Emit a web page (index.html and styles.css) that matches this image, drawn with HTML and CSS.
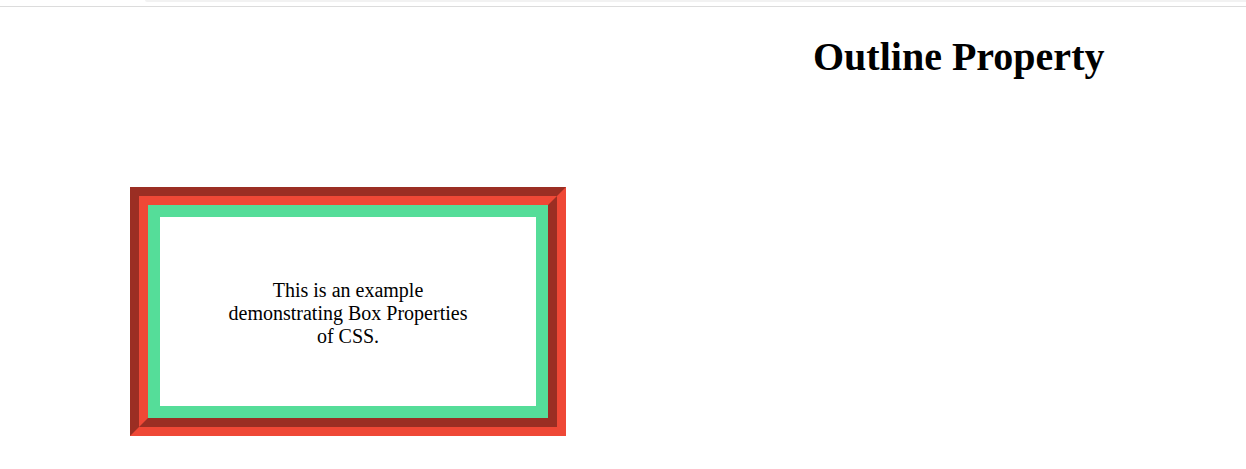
FILE: index.html
```html
<!DOCTYPE html>
<html lang="en">
<head>
<meta charset="utf-8">
<title>Outline Property</title>
<link rel="stylesheet" href="styles.css">
</head>
<body>
<div class="topbar"><div class="tab"></div></div>
<header class="header">
  <h1 class="title">Outline Property</h1>
</header>
<main class="main">
  <div class="box">This is an example demonstrating Box Properties of CSS.</div>
</main>
</body>
</html>
```

FILE: styles.css
```css
html, body {
  margin: 0;
  padding: 0;
  background: #ffffff;
}

body {
  font-family: "Liberation Serif", "Times New Roman", serif;
  color: #000000;
  min-height: 469px;
}

.topbar {
  height: 6px;
  border-bottom: 1px solid #dcdcdc;
}

.tab {
  margin-left: 145px;
  height: 2px;
  background: #f2f2f2;
  border-bottom-left-radius: 4px;
}

.header {
  padding-left: 813px;
  margin-top: 26px;
}

.title {
  margin: 0;
  font-size: 40px;
  font-weight: bold;
  white-space: nowrap;
}

.main {
  padding-left: 148px;
  margin-top: 125px;
  padding-bottom: 40px;
}

.box {
  width: 256px;
  padding: 62px 60px 58px;
  border: 12px solid #55dd99;
  outline: 18px groove #ef4836;
  text-align: center;
  font-size: 20px;
}
```
